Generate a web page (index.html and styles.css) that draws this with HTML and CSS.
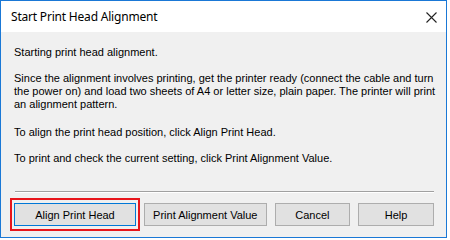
FILE: index.html
```html
<!DOCTYPE html>
<html lang="en">
<head>
    <meta charset="UTF-8">
    <title>Start Print Head Alignment</title>
    <link rel="stylesheet" href="styles.css">
</head>
<body>
    <div class="dialog">
        <div class="title-bar">
            <span class="title">Start Print Head Alignment</span>
            <svg class="close" width="11" height="11" viewBox="0 0 11 11">
                <path d="M0.5 0.5 L10.5 10.5 M10.5 0.5 L0.5 10.5" stroke="#222" stroke-width="1.1" fill="none"/>
            </svg>
        </div>
        <div class="content">
            <p class="first">Starting print head alignment.</p>
            <p>Since the alignment involves printing, get the printer ready (connect the cable and turn the power on) and load two sheets of A4 or letter size, plain paper. The printer will print an alignment pattern.</p>
            <p class="align">To align the print head position, click Align Print Head.</p>
            <p>To print and check the current setting, click Print Alignment Value.</p>
            <div class="separator"></div>
            <div class="buttons">
                <div class="highlight">
                    <button class="btn focused">Align Print Head</button>
                </div>
                <button class="btn btn-wide">Print Alignment Value</button>
                <button class="btn">Cancel</button>
                <button class="btn">Help</button>
            </div>
        </div>
    </div>
</body>
</html>
```

FILE: styles.css
```css
body {
    margin: 0;
    background-color: white;
    font-family: "Liberation Sans", Arial, sans-serif;
}
.dialog {
    width: 445px;
    height: 236px;
    border: 1px solid #1a78d6;
    display: flex;
    flex-direction: column;
}
.title-bar {
    height: 31px;
    background-color: white;
    display: flex;
    align-items: center;
    justify-content: space-between;
    padding: 0 9px 0 10px;
    flex-shrink: 0;
}
.title {
    font-family: "Noto Sans", sans-serif;
    font-size: 12px;
    letter-spacing: -0.2px;
    color: #000;
}
.close {
    display: block;
    margin-top: 1px;
}
.content {
    flex: 1;
    background-color: #f0f0f0;
    padding: 0 12px 0 13px;
    font-size: 11px;
    color: #000;
}
.content p {
    margin: 0 -6px 13px 0;
    line-height: 13px;
}
.content p.first {
    margin-top: 14px;
}
.content p.align {
    margin-top: 15px;
}
.separator {
    height: 1px;
    background-color: #a0a0a0;
    border-bottom: 1px solid #fff;
    margin: 26px 0 0 1px;
}
.buttons {
    display: flex;
    align-items: center;
    gap: 8px;
    margin-top: 10px;
}
.highlight {
    border: 2px solid #e8151b;
    padding: 3px 2px;
    margin: -5px -4px;
}
.btn {
    height: 23px;
    width: 76px;
    background-color: #e1e1e1;
    border: 1px solid #adadad;
    font-family: "Liberation Sans", Arial, sans-serif;
    font-size: 11px;
    color: #000;
    padding: 0;
    display: block;
}
.btn-wide {
    width: 123px;
}
.focused {
    border-color: #0078d7;
    width: 122px;
}
```
